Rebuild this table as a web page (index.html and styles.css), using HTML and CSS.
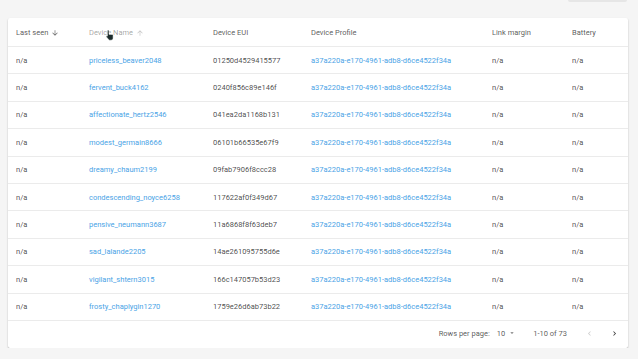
FILE: index.html
```html
<!DOCTYPE html>
<html lang="en">
<head>
    <meta charset="UTF-8">
    <title>Devices</title>
    <link rel="stylesheet" href="styles.css">
</head>
<body>
    <div class="page">
        <div class="toolbar">
            <div class="tool_button"></div>
        </div>
        <div class="card">
            <table class="devices">
                <colgroup>
                    <col class="c_seen">
                    <col class="c_name">
                    <col class="c_eui">
                    <col class="c_profile">
                    <col class="c_margin">
                    <col class="c_battery">
                </colgroup>
                <thead>
                    <tr>
                        <th class="sorted">Last seen <span class="arrow">
                            <svg width="8" height="8" viewBox="0 0 24 24"><path d="M20 12l-1.41-1.41L13 16.17V4h-2v12.17l-5.58-5.59L4 12l8 8 8-8z" fill="#666"/></svg>
                        </span></th>
                        <th class="hover">Device Name <span class="arrow">
                            <svg width="8" height="8" viewBox="0 0 24 24"><path d="M4 12l1.41 1.41L11 7.83V20h2V7.83l5.58 5.59L20 12l-8-8-8 8z" fill="#c4c4c4"/></svg>
                        </span>
                            <svg class="cursor" width="8" height="11" viewBox="0 0 8 11"><path d="M1.4 0.9a0.8 0.8 0 0 1 1.6 0V4.4H6.3a0.8 0.8 0 0 1 0.8 0.8V8.2a2 2 0 0 1-2 2H3.2L0.4 6.9a0.6 0.6 0 0 1 1-0.8z" fill="#1c2b2b" stroke="#fff" stroke-width="0.5"/></svg>
                        </th>
                        <th>Device EUI</th>
                        <th>Device Profile</th>
                        <th>Link margin</th>
                        <th>Battery</th>
                    </tr>
                </thead>
                <tbody>
                    <tr><td>n/a</td><td><a href="#">priceless_beaver2048</a></td><td>01250d4529415577</td><td><a href="#">a37a220a-e170-4961-adb8-d6ce4522f34a</a></td><td>n/a</td><td>n/a</td></tr>
                    <tr><td>n/a</td><td><a href="#">fervent_buck4162</a></td><td>0240f856c89e146f</td><td><a href="#">a37a220a-e170-4961-adb8-d6ce4522f34a</a></td><td>n/a</td><td>n/a</td></tr>
                    <tr><td>n/a</td><td><a href="#">affectionate_hertz2546</a></td><td>041ea2da1168b131</td><td><a href="#">a37a220a-e170-4961-adb8-d6ce4522f34a</a></td><td>n/a</td><td>n/a</td></tr>
                    <tr><td>n/a</td><td><a href="#">modest_germain8666</a></td><td>06101b66535e67f9</td><td><a href="#">a37a220a-e170-4961-adb8-d6ce4522f34a</a></td><td>n/a</td><td>n/a</td></tr>
                    <tr><td>n/a</td><td><a href="#">dreamy_chaum2199</a></td><td>09fab7906f8ccc28</td><td><a href="#">a37a220a-e170-4961-adb8-d6ce4522f34a</a></td><td>n/a</td><td>n/a</td></tr>
                    <tr><td>n/a</td><td><a href="#">condescending_noyce6258</a></td><td>117622af0f349d67</td><td><a href="#">a37a220a-e170-4961-adb8-d6ce4522f34a</a></td><td>n/a</td><td>n/a</td></tr>
                    <tr><td>n/a</td><td><a href="#">pensive_neumann3687</a></td><td>11a6868f8f63deb7</td><td><a href="#">a37a220a-e170-4961-adb8-d6ce4522f34a</a></td><td>n/a</td><td>n/a</td></tr>
                    <tr><td>n/a</td><td><a href="#">sad_lalande2205</a></td><td>14ae261095755d6e</td><td><a href="#">a37a220a-e170-4961-adb8-d6ce4522f34a</a></td><td>n/a</td><td>n/a</td></tr>
                    <tr><td>n/a</td><td><a href="#">vigilant_shtern3015</a></td><td>166c147057b53d23</td><td><a href="#">a37a220a-e170-4961-adb8-d6ce4522f34a</a></td><td>n/a</td><td>n/a</td></tr>
                    <tr><td>n/a</td><td><a href="#">frosty_chaplygin1270</a></td><td>1759e26d6ab73b22</td><td><a href="#">a37a220a-e170-4961-adb8-d6ce4522f34a</a></td><td>n/a</td><td>n/a</td></tr>
                </tbody>
            </table>
            <div class="pager">
                <span class="pager_label">Rows per page:</span>
                <span class="pager_select">10
                    <svg width="8" height="8" viewBox="0 0 24 24"><path d="M7 10l5 5 5-5z" fill="#777"/></svg>
                </span>
                <span class="pager_range">1-10 of 73</span>
                <span class="pager_btn disabled">
                    <svg width="9" height="9" viewBox="0 0 24 24"><path d="M15.41 7.41L14 6l-6 6 6 6 1.41-1.41L10.83 12z" fill="#ccc"/></svg>
                </span>
                <span class="pager_btn">
                    <svg width="9" height="9" viewBox="0 0 24 24"><path d="M10 6L8.59 7.41 13.17 12l-4.58 4.59L10 18l6-6z" fill="#333"/></svg>
                </span>
            </div>
        </div>
    </div>
</body>
</html>
```

FILE: styles.css
```css
body{
    margin:0;
    background:#f5f5f5;
    font-family:Roboto, "Liberation Sans", sans-serif;
    font-size:7.5px;
    color:rgba(0,0,0,0.72);
}
.page{
    padding:0 10px 0 8px;
}
.toolbar{
    display:flex;
    justify-content:flex-end;
    height:2px;
    margin-bottom:16px;
}
.tool_button{
    width:59px;
    height:2px;
    margin-right:1px;
    background:#e6e6e6;
    border-radius:0 0 2px 2px;
}
.card{
    background:#fff;
    border-radius:2px;
    box-shadow:0 1px 2px rgba(0,0,0,0.2), 0 1px 1px rgba(0,0,0,0.12);
}
.devices{
    width:100%;
    border-collapse:collapse;
    table-layout:fixed;
}
.c_seen{ width:73px; }
.c_name{ width:124px; }
.c_eui{ width:98px; }
.c_profile{ width:181px; }
.c_margin{ width:80px; }
.c_battery{ width:64px; }
.devices th,
.devices td{
    padding:0 0 0 8px;
    text-align:left;
    white-space:nowrap;
    border-bottom:1px solid #ebebeb;
}
.devices th{
    height:27px;
    padding-top:1px;
    font-weight:400;
    color:rgba(0,0,0,0.68);
    position:relative;
}
.devices td{
    height:26.4px;
}
.devices th.hover{
    color:rgba(0,0,0,0.38);
}
.arrow{
    display:inline-block;
    vertical-align:middle;
    margin-left:1px;
    line-height:0;
}
.cursor{
    position:absolute;
    left:25px;
    top:12px;
}
.devices a{
    color:#4aa3e6;
    text-decoration:none;
}
.pager{
    display:flex;
    align-items:center;
    justify-content:flex-end;
    height:25px;
    padding-bottom:2px;
    color:rgba(0,0,0,0.68);
}
.pager_label{
    margin-right:7px;
}
.pager_select{
    display:flex;
    align-items:center;
    gap:3px;
    margin-right:17px;
}
.pager_range{
    margin-right:16px;
}
.pager_btn{
    display:flex;
    width:13px;
    justify-content:center;
    margin-right:7px;
}
.pager_btn.disabled{
    margin-right:12px;
}
```
